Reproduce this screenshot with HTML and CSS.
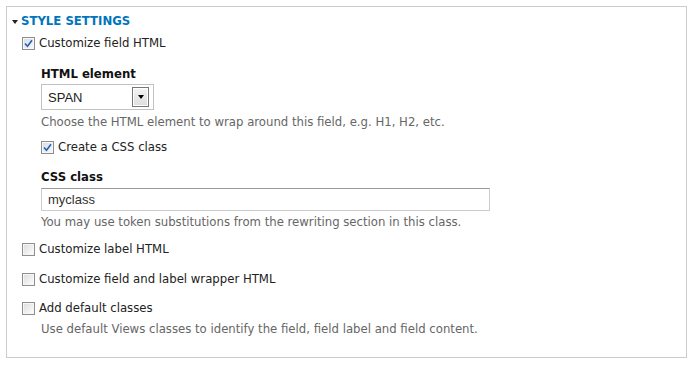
FILE: index.html
```html
<!DOCTYPE html>
<html>
<head>
<meta charset="utf-8">
<link rel="stylesheet" href="styles.css">
</head>
<body>
<div class="fieldset">
  <div class="legend"><span class="tri"></span><span class="legend-text">STYLE SETTINGS</span></div>

  <div class="row r1">
    <span class="cb checked"><svg viewBox="0 0 9 9" width="9" height="9"><path d="M1 4.5 L3.5 7.2 L8 1.2" fill="none" stroke="#2a5fb0" stroke-width="1.6"/></svg></span>
    <span class="lbl">Customize field HTML</span>
  </div>

  <div class="nested">
    <div class="title t1">HTML element</div>
    <div class="select">
      <span class="select-val">SPAN</span>
      <span class="select-btn"><span class="arrow"></span></span>
    </div>
    <div class="desc d1">Choose the HTML element to wrap around this field, e.g. H1, H2, etc.</div>

    <div class="row r2">
      <span class="cb checked"><svg viewBox="0 0 9 9" width="9" height="9"><path d="M1 4.5 L3.5 7.2 L8 1.2" fill="none" stroke="#2a5fb0" stroke-width="1.6"/></svg></span>
      <span class="lbl">Create a CSS class</span>
    </div>

    <div class="title t2">CSS class</div>
    <div class="input">myclass</div>
    <div class="desc d2">You may use token substitutions from the rewriting section in this class.</div>
  </div>

  <div class="row r3"><span class="cb"></span><span class="lbl">Customize label HTML</span></div>
  <div class="row r4"><span class="cb"></span><span class="lbl">Customize field and label wrapper HTML</span></div>
  <div class="row r5"><span class="cb"></span><span class="lbl">Add default classes</span></div>
  <div class="nested">
    <div class="desc d3">Use default Views classes to identify the field, field label and field content.</div>
  </div>
</div>
</body>
</html>
```
FILE: styles.css
```css
html, body { background: #fff; }
body {
  margin: 6px;
  font-family: "DejaVu Sans Condensed", "DejaVu Sans", sans-serif;
  font-size: 13px;
  color: #222;
}
.fieldset {
  border: 1px solid #ccc;
  height: 350px;
  box-sizing: border-box;
  height: 352px;
  padding: 5px 0 0 15px;
}
.legend {
  display: flex;
  align-items: center;
  height: 18px;
  margin-left: -10px;
}
.tri {
  width: 0; height: 0;
  border-left: 3.5px solid transparent;
  border-right: 3.5px solid transparent;
  border-top: 4px solid #222;
  margin: 1px 3px 0 0;
}
.legend-text {
  color: #0074bd;
  font-weight: bold;
  font-size: 13px;
  line-height: 18px;
}
.row {
  display: flex;
  align-items: center;
  height: 18px;
  line-height: 18px;
}
.r1 { margin-top: 4px; }
.r2 { margin-top: 7px; }
.r3 { margin-top: 9px; }
.r4 { margin-top: 12px; }
.r5 { margin-top: 11px; }
.cb {
  width: 13px; height: 13px;
  box-sizing: border-box;
  border: 1px solid #8e8f8f;
  background: linear-gradient(135deg, #dcdcdc 0%, #f4f4f4 70%, #fff 100%);
  box-shadow: inset 0 0 0 1px #f6f6f6;
  margin-right: 4px;
  display: flex;
  align-items: center;
  justify-content: center;
  flex: none;
}
.cb.checked {
  border-color: #8e8f8f;
  background: linear-gradient(135deg, #d6dbe4 0%, #eef0f4 70%, #fbfbfc 100%);
}
.cb svg { display: block; }
.nested { margin-left: 19px; }
.title {
  font-weight: bold;
  line-height: 18px;
  height: 18px;
  color: #111;
}
.t1 { margin-top: 13px; }
.t2 { margin-top: 12px; }
.select {
  margin-top: 1px;
  width: 113px;
  height: 26px;
  box-sizing: border-box;
  border: 1px solid #c2c2c2;
  display: flex;
  align-items: center;
  justify-content: space-between;
  padding: 0 4px 0 6px;
  font-family: "Liberation Sans", Arial, sans-serif;
  font-size: 13px;
  color: #222;
}
.select-btn {
  width: 17px; height: 20px;
  box-sizing: border-box;
  border: 1px solid #777;
  background: linear-gradient(#f4f4f4, #dedede);
  box-shadow: inset 0 0 0 1px #fff;
  display: flex;
  align-items: center;
  justify-content: center;
}
.arrow {
  width: 0; height: 0;
  border-left: 3.5px solid transparent;
  border-right: 3.5px solid transparent;
  border-top: 4px solid #000;
}
.desc {
  color: #666;
  font-size: 13px;
  line-height: 18px;
  height: 18px;
}
.d1 { margin-top: 3px; }
.d2 { margin-top: 2px; }
.d3 { margin-top: 3px; }
.input {
  margin-top: 2px;
  width: 449px;
  height: 23px;
  box-sizing: border-box;
  border: 1px solid #ccc;
  border-top-color: #999;
  padding: 0 6px;
  line-height: 21px;
  font-family: "Liberation Sans", Arial, sans-serif;
  font-size: 13px;
  color: #333;
}
```
